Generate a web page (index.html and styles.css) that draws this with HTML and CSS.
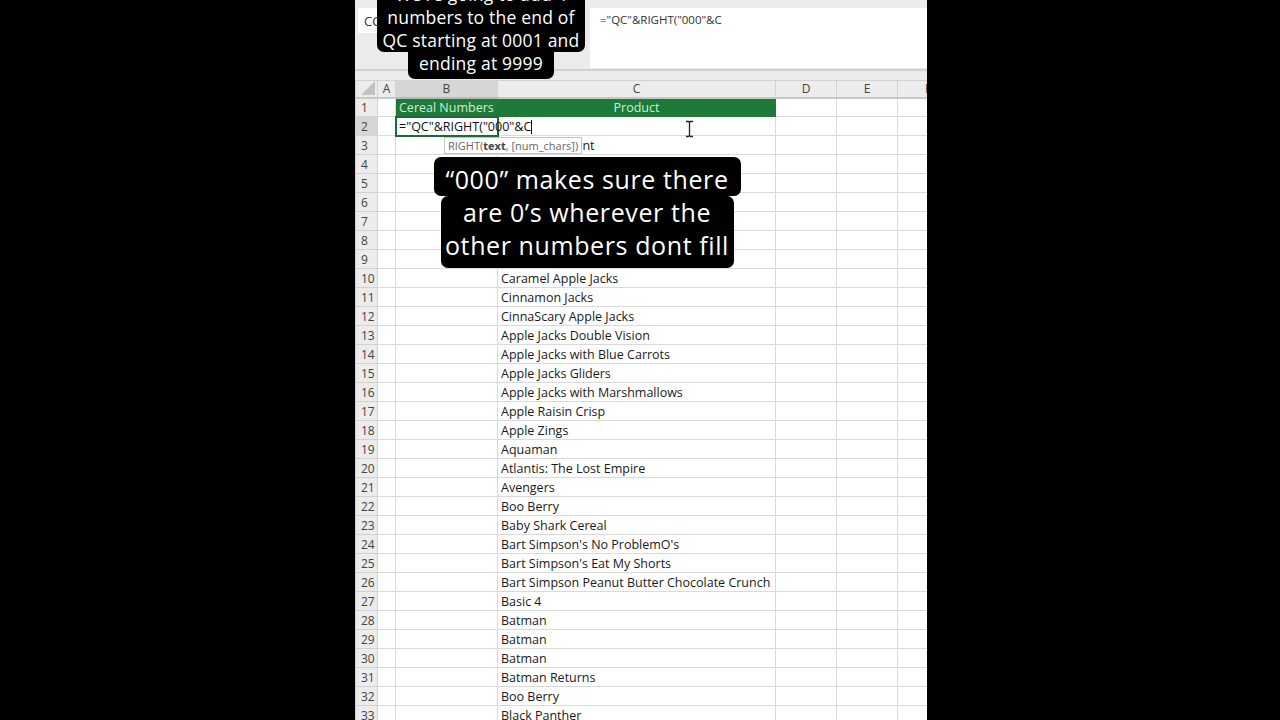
FILE: index.html
```html
<html>
<head>
<title>Cereal Numbers</title>
<meta charset="utf-8">
<link rel="stylesheet" href="styles.css">
</head>
<body>
<div class="phone">
	<div class="toolbar">
		<div class="namebox">CC</div>
		<div class="formula">="QC"&amp;RIGHT("000"&amp;C</div>
	</div>

	<table class="sheet">
		<colgroup>
			<col class="w-num"><col class="w-a"><col class="w-b"><col class="w-c"><col class="w-d"><col class="w-e"><col class="w-f">
		</colgroup>
		<tr class="colhead">
			<th class="corner"><span class="tri"></span></th><th>A</th><th class="sel">B</th><th>C</th><th>D</th><th>E</th><th>F</th>
		</tr>
		<tr><th>1</th><td></td><td class="head">Cereal Numbers</td><td class="head center">Product</td><td></td><td></td><td></td></tr>
		<tr><th class="sel">2</th><td></td><td class="active"><span class="edit">="QC"&amp;RIGHT("000"&amp;C<i class="caret"></i></span></td><td></td><td></td><td></td><td></td></tr>
		<tr><th>3</th><td></td><td></td><td>Alpha-Bits Giant</td><td></td><td></td><td></td></tr>
		<tr><th>4</th><td></td><td></td><td>Alpha-Bits</td><td></td><td></td><td></td></tr>
		<tr><th>5</th><td></td><td></td><td>Apple Jacks</td><td></td><td></td><td></td></tr>
		<tr><th>6</th><td></td><td></td><td>Apple Jacks Apple</td><td></td><td></td><td></td></tr>
		<tr><th>7</th><td></td><td></td><td>Apple Jacks Bowl</td><td></td><td></td><td></td></tr>
		<tr><th>8</th><td></td><td></td><td>Apple Jacks Cereal</td><td></td><td></td><td></td></tr>
		<tr><th>9</th><td></td><td></td><td>Apple Jacks 2</td><td></td><td></td><td></td></tr>
		<tr><th>10</th><td></td><td></td><td>Caramel Apple Jacks</td><td></td><td></td><td></td></tr>
		<tr><th>11</th><td></td><td></td><td>Cinnamon Jacks</td><td></td><td></td><td></td></tr>
		<tr><th>12</th><td></td><td></td><td>CinnaScary Apple Jacks</td><td></td><td></td><td></td></tr>
		<tr><th>13</th><td></td><td></td><td>Apple Jacks Double Vision</td><td></td><td></td><td></td></tr>
		<tr><th>14</th><td></td><td></td><td>Apple Jacks with Blue Carrots</td><td></td><td></td><td></td></tr>
		<tr><th>15</th><td></td><td></td><td>Apple Jacks Gliders</td><td></td><td></td><td></td></tr>
		<tr><th>16</th><td></td><td></td><td>Apple Jacks with Marshmallows</td><td></td><td></td><td></td></tr>
		<tr><th>17</th><td></td><td></td><td>Apple Raisin Crisp</td><td></td><td></td><td></td></tr>
		<tr><th>18</th><td></td><td></td><td>Apple Zings</td><td></td><td></td><td></td></tr>
		<tr><th>19</th><td></td><td></td><td>Aquaman</td><td></td><td></td><td></td></tr>
		<tr><th>20</th><td></td><td></td><td>Atlantis: The Lost Empire</td><td></td><td></td><td></td></tr>
		<tr><th>21</th><td></td><td></td><td>Avengers</td><td></td><td></td><td></td></tr>
		<tr><th>22</th><td></td><td></td><td>Boo Berry</td><td></td><td></td><td></td></tr>
		<tr><th>23</th><td></td><td></td><td>Baby Shark Cereal</td><td></td><td></td><td></td></tr>
		<tr><th>24</th><td></td><td></td><td>Bart Simpson's No ProblemO's</td><td></td><td></td><td></td></tr>
		<tr><th>25</th><td></td><td></td><td>Bart Simpson's Eat My Shorts</td><td></td><td></td><td></td></tr>
		<tr><th>26</th><td></td><td></td><td>Bart Simpson Peanut Butter Chocolate Crunch</td><td></td><td></td><td></td></tr>
		<tr><th>27</th><td></td><td></td><td>Basic 4</td><td></td><td></td><td></td></tr>
		<tr><th>28</th><td></td><td></td><td>Batman</td><td></td><td></td><td></td></tr>
		<tr><th>29</th><td></td><td></td><td>Batman</td><td></td><td></td><td></td></tr>
		<tr><th>30</th><td></td><td></td><td>Batman</td><td></td><td></td><td></td></tr>
		<tr><th>31</th><td></td><td></td><td>Batman Returns</td><td></td><td></td><td></td></tr>
		<tr><th>32</th><td></td><td></td><td>Boo Berry</td><td></td><td></td><td></td></tr>
		<tr><th>33</th><td></td><td></td><td>Black Panther</td><td></td><td></td><td></td></tr>
	</table>

	<div class="tip">RIGHT(<b>text</b>, [num_chars])</div>

	<svg class="ibeam" width="9" height="18" viewBox="0 0 9 18">
		<path d="M1 1.5h2.5l1 1 1-1H8M4.5 2.5v13M1 16.5h2.5l1-1 1 1H8" fill="none" stroke="#222" stroke-width="1.3"/>
	</svg>

	<div class="caption cap-top">
		<div class="box wide">We're going to add 4<br>numbers to the end of<br>QC starting at 0001 and</div>
		<div class="box narrow">ending at 9999</div>
	</div>

	<div class="caption cap-mid">
		<div class="box wide">“000” makes sure there</div>
		<div class="box narrow">are 0’s wherever the<br>other numbers dont fill</div>
	</div>
</div>
</body>
</html>
```

FILE: styles.css
```css
body{
	margin:0;
	background:#000;
	font:12px 'Open Sans',sans-serif;
	color:#222;
	overflow:hidden;
}
*{box-sizing:border-box}

.phone{
	width:572px;
	height:720px;
	margin:0 auto;
	position:relative;
	left:1px;
	overflow:hidden;
	background:#fff;
}

/* formula area */
.toolbar{
	height:80px;
	background:#ebebeb;
	display:flex;
	align-items:flex-start;
	padding:8px 0 0 3px;
	position:relative;
}
.toolbar:after{
	content:'';
	position:absolute;
	left:0;right:0;top:69px;
	height:2px;
	background:#d2d2d2;
}
.namebox{
	width:80px;
	height:25px;
	background:#fff;
	padding:4px 6px;
	font-size:13px;
	color:#333;
}
.formula{
	margin-left:auto;
	width:337px;
	height:60px;
	background:#fff;
	padding:4px 10px;
	font-size:11.5px;
	color:#333;
}

/* grid */
.sheet{
	border-collapse:collapse;
	table-layout:fixed;
	width:603px;
}
.w-num{width:22px}
.w-a{width:18px}
.w-b{width:102px}
.w-c{width:278px}
.w-d{width:61px}
.w-e{width:61px}
.w-f{width:61px}

.sheet th,
.sheet td{
	height:19px;
	padding:0 3px;
	border:1px solid #dadada;
	white-space:nowrap;
	overflow:visible;
	font-weight:400;
	line-height:17px;
}
.sheet td{font-size:12.5px;color:#1a1a1a}
.sheet th{
	background:#ececec;
	color:#444;
	font-size:12px;
	text-align:left;
	padding-left:5px;
	border-color:#d2d2d2;
}
.sheet th.sel{background:#d6d6d6}
.colhead th{
	height:17px;
	line-height:15px;
	text-align:center;
	padding:0;
	border-bottom:2px solid #c8c8c8;
}
.colhead th.sel{border-bottom-color:#b9b9b9}
.corner{position:relative}
.tri{
	position:absolute;
	right:2px;bottom:2px;
	width:0;height:0;
	border-left:14px solid transparent;
	border-bottom:14px solid #c2c2c2;
}

.sheet td.head{
	background:#1f7a3a;
	color:#cfeed2;
	border-color:#1f7a3a;
}
.center{text-align:center}

.active{
	position:relative;
	outline:2px solid #1b6b36;
	outline-offset:-1px;
	padding-left:2px;
}
.edit{
	position:relative;
	z-index:1;
	color:#111;
}
.caret{
	display:inline-block;
	width:1px;
	height:14px;
	background:#111;
	vertical-align:-3px;
}

/* overlays */
.tip{
	position:absolute;
	left:89px;top:137px;
	height:17px;
	padding:0 3px;
	background:#fff;
	border:1px solid #c4c4c4;
	font-size:11px;
	line-height:15px;
	color:#666;
	white-space:nowrap;
}
.tip b{color:#444}
.ibeam{
	position:absolute;
	left:330px;top:120px;
}

/* captions */
.caption{
	position:absolute;
	display:flex;
	flex-direction:column;
	align-items:center;
	text-align:center;
	color:#fff;
	font-family:'Open Sans',sans-serif;
	font-weight:500;
	white-space:nowrap;
}
.caption .box{
	background:#000;
	border-radius:7px;
}
.cap-top{
	left:0;width:252px;
	top:-17px;
	font-size:17.5px;
	line-height:23px;
	letter-spacing:.2px;
}
.cap-top .wide{width:208px;border-radius:0 0 7px 7px}
.cap-top .narrow{width:146px;padding-bottom:4px;border-radius:0 0 7px 7px}
.cap-mid{
	left:62px;width:340px;
	top:157px;
	font-size:25px;
	line-height:33px;
	letter-spacing:.6px;
}
.cap-mid .wide{width:307px;padding-top:6px}
.cap-mid .narrow{width:293px;padding-bottom:6px}
```
